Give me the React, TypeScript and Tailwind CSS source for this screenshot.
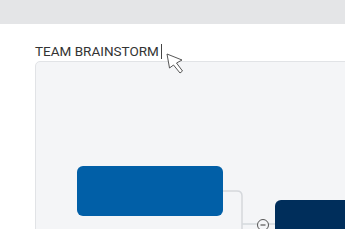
import React from "react";

const Canvas: React.FC = () => (
	<div className="relative w-[420px] h-[240px] rounded-[5px] border border-[#e1e3e6] bg-[#f4f5f7]">
		{/* connectors */}
		<svg
			className="absolute left-0 top-0"
			width="420"
			height="240"
			viewBox="0 0 420 240"
			fill="none"
		>
			<path
				d="M187 129 H201 Q206 129 206 134 V240"
				stroke="#d5d8dc"
				strokeWidth="1.5"
			/>
			<path d="M206 162 H240" stroke="#d5d8dc" strokeWidth="1.5" />
			<circle cx="227" cy="163" r="5.5" fill="#f4f5f7" stroke="#555" strokeWidth="1" />
			<path d="M224.5 163 H229.5" stroke="#555" strokeWidth="1.2" />
		</svg>
		<div className="absolute left-[41px] top-[104px] w-[146px] h-[50px] rounded-[6px] bg-[#015fa7]" />
		<div className="absolute left-[239px] top-[138px] w-[120px] h-[80px] rounded-[6px] bg-[#002e5b]" />
	</div>
);

const App: React.FC = () => {
	return (
		<div className="w-[345px] h-[229px] overflow-hidden bg-white font-['Roboto',sans-serif]">
			<div className="h-6 bg-[#e4e5e7]" />
			<div className="pl-[35px] pt-[17px]">
				<div className="relative z-10 flex items-center h-[20px]">
					<span className="text-[13.5px] leading-[20px] text-[#333]">TEAM BRAINSTORM</span>
					<span className="ml-[2px] w-[1.5px] h-[15px] bg-[#444]" />
					<svg
						className="absolute left-[131px] top-[12px]"
						width="20"
						height="22"
						viewBox="0 0 20 22"
					>
						<path
							d="M1 1 L3.5 15 L7.5 12 L14 20 L16.5 18 L10.5 10 L16 7 Z"
							fill="#fff"
							stroke="#444"
							strokeWidth="0.9"
							strokeLinejoin="round"
						/>
					</svg>
				</div>
				<Canvas />
			</div>
		</div>
	);
};

export default App;
